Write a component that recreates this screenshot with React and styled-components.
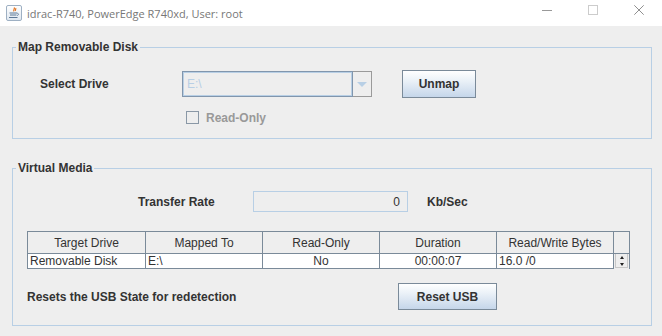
import React from 'react';
import styled, { createGlobalStyle } from 'styled-components';

const GlobalStyle = createGlobalStyle`
  html, body {
    margin: 0;
    padding: 0;
    background: #eeeeee;
  }

  body {
    width: 662px;
    height: 336px;
    overflow: hidden;
    font-family: "Liberation Sans", Arial, sans-serif;
    color: #333333;
  }
`;

const Window = styled.div`
  display: flex;
  flex-direction: column;
  width: 662px;
  height: 336px;
  background: #eeeeee;
`;

const TitleBar = styled.header`
  display: flex;
  align-items: center;
  height: 26px;
  padding-left: 6px;
  background: #ffffff;
`;

const AppIcon = styled.svg`
  width: 16px;
  height: 16px;
  margin-right: 5px;
`;

const Caption = styled.span`
  font-family: "Open Sans", "Noto Sans", sans-serif;
  font-size: 11px;
  color: #777777;
  white-space: nowrap;
`;

const Controls = styled.div`
  display: flex;
  height: 26px;
  margin-left: auto;
`;

const Control = styled.div`
  display: flex;
  align-items: center;
  justify-content: center;
  width: 46px;
  height: 26px;
  padding-bottom: 6px;
  box-sizing: border-box;

  svg {
    width: 10px;
    height: 10px;
  }
`;

const Body = styled.main`
  display: flex;
  flex-direction: column;
  padding: 14px 10px 0 12px;
`;

const Group = styled.fieldset`
  margin: 0;
  margin-top: ${({ $gap }) => $gap || 0}px;
  min-width: 0;
  padding: 0;
  border: 1px solid #b8cfe5;
`;

const Legend = styled.legend`
  margin-left: 3px;
  padding: 0 2px;
  font-size: 12px;
  line-height: 14px;
  font-weight: bold;
  color: #333333;
`;

const GroupContent = styled.div`
  display: flex;
  flex-direction: column;
  padding: ${({ $pad }) => $pad};
`;

const Row = styled.div`
  display: flex;
  align-items: center;
  height: ${({ $h }) => $h}px;
  margin-top: ${({ $gap }) => $gap || 0}px;
  padding-left: ${({ $indent }) => $indent || 0}px;
`;

const Label = styled.span`
  flex: none;
  width: ${({ $w }) => ($w ? `${$w}px` : 'auto')};
  font-size: 12px;
  font-weight: bold;
  color: ${({ $disabled }) => ($disabled ? '#999999' : '#333333')};
  white-space: nowrap;
`;

const Combo = styled.div`
  display: flex;
  width: 190px;
  height: 26px;
`;

const ComboField = styled.div`
  flex: 1;
  display: flex;
  align-items: center;
  padding-left: 4px;
  border: 1px solid #8196ad;
  box-shadow: inset 0 0 0 1px #b8cfe5;
  font-size: 12px;
  color: #b8cfe5;
`;

const ComboArrow = styled.div`
  display: flex;
  align-items: center;
  justify-content: center;
  width: 18px;
  border: 1px solid #9a9a9a;
  border-left: none;
  background: #eeeeee;

  &::after {
    content: '';
    border-left: 5px solid transparent;
    border-right: 5px solid transparent;
    border-top: 5px solid #b8cfe5;
  }
`;

const Button = styled.button`
  flex: none;
  width: ${({ $w }) => $w}px;
  height: ${({ $h }) => $h}px;
  margin-left: ${({ $gap }) => $gap || 0}px;
  padding: 0;
  border: 1px solid #7a8a99;
  background: linear-gradient(#ffffff 0%, #e9f0f7 40%, #c5d6ea 100%);
  font-family: inherit;
  font-size: 12px;
  font-weight: bold;
  color: #333333;
`;

const CheckBox = styled.span`
  flex: none;
  width: 11px;
  height: 11px;
  margin-right: 7px;
  border: 1px solid #8a98a6;
  background: #eeeeee;
`;

const RateField = styled.div`
  flex: none;
  display: flex;
  align-items: center;
  justify-content: flex-end;
  width: 155px;
  height: 21px;
  padding-right: 7px;
  box-sizing: border-box;
  border: 1px solid #b8cfe5;
  font-size: 12px;
  color: #333333;
`;

const Unit = styled(Label)`
  margin-left: 19px;
`;

const Table = styled.table`
  width: 602px;
  margin-top: 19px;
  border-collapse: collapse;
  table-layout: fixed;
  font-size: 12px;
  color: #333333;
`;

const Th = styled.th`
  box-sizing: border-box;
  width: ${({ $w }) => $w}px;
  height: 22px;
  padding: 0;
  border: 1px solid #7a8a99;
  background: #eeeeee;
  font-weight: normal;
  text-align: center;
`;

const Td = styled.td`
  height: 14px;
  padding: 0 2px;
  border: 1px solid #7a8a99;
  background: #ffffff;
  line-height: 14px;
  text-align: ${({ $align }) => $align || 'left'};
  white-space: nowrap;
  overflow: hidden;
`;

const ScrollTd = styled.td`
  height: 14px;
  padding: 0;
  border: 1px solid #7a8a99;
  border-bottom: none;
  background: #eeeeee;
`;

const Scroller = styled.div`
  display: flex;
  flex-direction: column;
  justify-content: space-around;
  align-items: center;
  height: 14px;
  margin: 0 1px;
  border: 1px solid #c8c8c8;
  border-top: none;
  box-sizing: border-box;
`;

const Tick = styled.span`
  border-left: 2.5px solid transparent;
  border-right: 2.5px solid transparent;
  ${({ $up }) => ($up ? 'border-bottom' : 'border-top')}: 3px solid #222222;
`;

const columns = [
  { title: 'Target Drive', width: 118 },
  { title: 'Mapped To', width: 117 },
  { title: 'Read-Only', width: 117 },
  { title: 'Duration', width: 117 },
  { title: 'Read/Write Bytes', width: 117 },
];

const row = [
  { value: 'Removable Disk' },
  { value: 'E:\\' },
  { value: 'No', align: 'center' },
  { value: '00:00:07', align: 'center' },
  { value: '16.0 /0' },
];

const App = () => {
  return (
    <Window>
      <GlobalStyle />
      <TitleBar>
        <AppIcon viewBox="0 0 16 16">
          <defs>
            <linearGradient id="ic" x1="0" y1="0" x2="0" y2="1">
              <stop offset="0" stopColor="#ffffff" />
              <stop offset="1" stopColor="#dfe7f0" />
            </linearGradient>
          </defs>
          <rect x="0.5" y="0.5" width="15" height="15" rx="1.5" fill="url(#ic)" stroke="#9eb0c3" />
          <path d="M8 2.5c1.5 1.3-1.2 2.2 0 3.8M9.6 3.2c0.8 0.9-0.8 1.5 0 2.6" stroke="#e2711d" strokeWidth="1.2" fill="none" />
          <path d="M3.5 8h7.5M4 10h6.5M3 12.5h8.5" stroke="#5d7896" strokeWidth="1" fill="none" />
          <path d="M11 8.2c2 0 2 2.2 0 2.2" stroke="#5d7896" strokeWidth="0.9" fill="none" />
        </AppIcon>
        <Caption>idrac-R740, PowerEdge R740xd, User: root</Caption>
        <Controls>
          <Control>
            <svg viewBox="0 0 10 10">
              <path d="M0 5.5h10" stroke="#999999" strokeWidth="1" />
            </svg>
          </Control>
          <Control>
            <svg viewBox="0 0 10 10">
              <rect x="0.5" y="0.5" width="9" height="9" fill="none" stroke="#cccccc" />
            </svg>
          </Control>
          <Control>
            <svg viewBox="0 0 10 10">
              <path d="M0.3 0.3l9.4 9.4M9.7 0.3L0.3 9.7" stroke="#8f8f8f" strokeWidth="1" />
            </svg>
          </Control>
        </Controls>
      </TitleBar>

      <Body>
        <Group>
          <Legend>Map Removable Disk</Legend>
          <GroupContent $pad="16px 0 14px 27px">
            <Row $h={28}>
              <Label $w={142}>Select Drive</Label>
              <Combo>
                <ComboField>E:\</ComboField>
                <ComboArrow />
              </Combo>
              <Button $w={74} $h={28} $gap={30}>
                Unmap
              </Button>
            </Row>
            <Row $h={13} $gap={13} $indent={146}>
              <CheckBox />
              <Label $disabled>Read-Only</Label>
            </Row>
          </GroupContent>
        </Group>

        <Group $gap={22}>
          <Legend>Virtual Media</Legend>
          <GroupContent $pad="16px 0 15px 14px">
            <Row $h={21} $indent={111}>
              <Label $w={115}>Transfer Rate</Label>
              <RateField>0</RateField>
              <Unit>Kb/Sec</Unit>
            </Row>
            <Table>
              <thead>
                <tr>
                  {columns.map(col => (
                    <Th key={col.title} $w={col.width}>
                      {col.title}
                    </Th>
                  ))}
                  <Th $w={16} />
                </tr>
              </thead>
              <tbody>
                <tr>
                  {row.map((cell, i) => (
                    <Td key={i} $align={cell.align}>
                      {cell.value}
                    </Td>
                  ))}
                  <ScrollTd>
                    <Scroller>
                      <Tick $up />
                      <Tick />
                    </Scroller>
                  </ScrollTd>
                </tr>
              </tbody>
            </Table>
            <Row $h={27} $gap={14}>
              <Label $w={371}>Resets the USB State for redetection</Label>
              <Button $w={99} $h={27}>
                Reset USB
              </Button>
            </Row>
          </GroupContent>
        </Group>
      </Body>
    </Window>
  );
};

export default App;
